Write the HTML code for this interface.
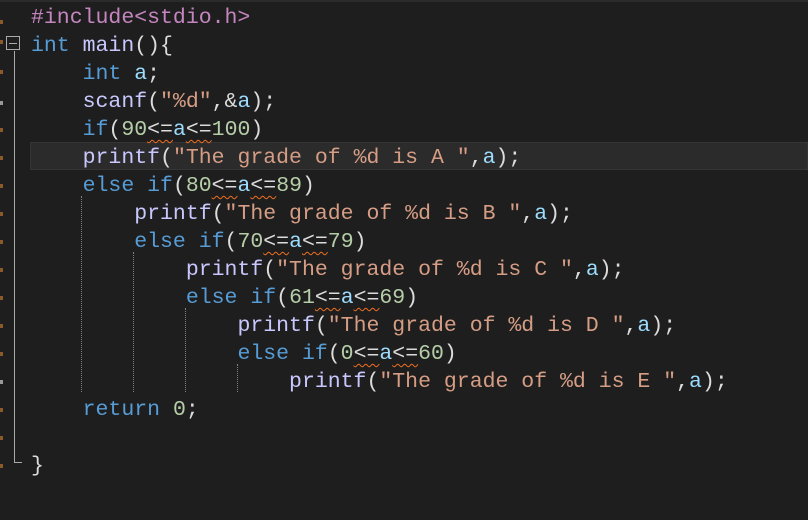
<!DOCTYPE html>
<html><head><meta charset="utf-8"><style>
html,body{margin:0;padding:0;}
body{width:808px;height:520px;background:#1e1e1e;position:relative;overflow:hidden;font-family:"Liberation Mono",monospace;font-size:21.5px;}
.l{position:absolute;left:31px;height:28px;line-height:28px;white-space:pre;color:#dcdcdc;margin-top:2px;}
.k{color:#569cd6}.f{color:#c8c8ff}.v{color:#9cdcfe}.s{color:#d69d85}.n{color:#b5cea8}.p{color:#c586c0}.o{color:#dcdcdc}
.w{text-decoration:underline wavy #f07020;text-decoration-thickness:1px;text-underline-offset:4px;}
.hl{position:absolute;left:30px;top:142px;width:778px;height:28px;background:#2b2b2b;border:1px solid #353535;box-sizing:border-box;}
.g{position:absolute;width:0;border-left:1px dotted #808080;}
.m{position:absolute;left:0;width:3px;height:4px;background:#8a5a2a;}
</style></head><body>
<div style="position:absolute;left:0;top:0;width:808px;height:2px;background:#2a2a2a"></div>
<div class="hl"></div>
<div style="position:absolute;left:6px;top:36px;width:14px;height:14px;border:1px solid #aaa;box-sizing:border-box"></div>
<div style="position:absolute;left:9px;top:43px;width:8px;height:1px;background:#aaa"></div>
<div style="position:absolute;left:14px;top:51px;width:1px;height:411px;background:#aaa"></div>
<div style="position:absolute;left:14px;top:462px;width:8px;height:1px;background:#aaa"></div>
<div class="g" style="left:81px;top:196px;height:196px"></div>
<div class="g" style="left:133px;top:252px;height:140px"></div>
<div class="g" style="left:185px;top:308px;height:84px"></div>
<div class="g" style="left:237px;top:364px;height:28px"></div>
<div class="m" style="top:20px"></div><div class="m" style="top:40px"></div><div class="m" style="top:70px"></div>
<div class="m" style="top:101px;background:#999"></div><div class="m" style="top:128px"></div><div class="m" style="top:156px"></div>
<div class="m" style="top:184px"></div><div class="m" style="top:212px"></div><div class="m" style="top:240px"></div>
<div class="m" style="top:268px"></div><div class="m" style="top:296px"></div><div class="m" style="top:324px"></div>
<div class="m" style="top:352px"></div><div class="m" style="top:380px;background:#999"></div><div class="m" style="top:408px"></div>
<div class="m" style="top:436px"></div><div class="m" style="top:464px"></div>

<div class="l" style="top:2px"><span class="p">#include&lt;stdio.h&gt;</span></div>
<div class="l" style="top:30px"><span class="k">int</span> <span class="f">main</span>(){</div>
<div class="l" style="top:58px">    <span class="k">int</span> <span class="v">a</span>;</div>
<div class="l" style="top:86px">    <span class="f">scanf</span>(<span class="s">"%d"</span>,&amp;<span class="v">a</span>);</div>
<div class="l" style="top:114px">    <span class="k">if</span>(<span class="n">90</span><span class="w">&lt;=</span><span class="v">a</span><span class="w">&lt;=</span><span class="n">100</span>)</div>
<div class="l" style="top:142px">    <span class="f">printf</span>(<span class="s">"The grade of %d is A "</span>,<span class="v">a</span>);</div>
<div class="l" style="top:170px">    <span class="k">else</span> <span class="k">if</span>(<span class="n">80</span><span class="w">&lt;=</span><span class="v">a</span><span class="w">&lt;=</span><span class="n">89</span>)</div>
<div class="l" style="top:198px">        <span class="f">printf</span>(<span class="s">"The grade of %d is B "</span>,<span class="v">a</span>);</div>
<div class="l" style="top:226px">        <span class="k">else</span> <span class="k">if</span>(<span class="n">70</span><span class="w">&lt;=</span><span class="v">a</span><span class="w">&lt;=</span><span class="n">79</span>)</div>
<div class="l" style="top:254px">            <span class="f">printf</span>(<span class="s">"The grade of %d is C "</span>,<span class="v">a</span>);</div>
<div class="l" style="top:282px">            <span class="k">else</span> <span class="k">if</span>(<span class="n">61</span><span class="w">&lt;=</span><span class="v">a</span><span class="w">&lt;=</span><span class="n">69</span>)</div>
<div class="l" style="top:310px">                <span class="f">printf</span>(<span class="s">"The grade of %d is D "</span>,<span class="v">a</span>);</div>
<div class="l" style="top:338px">                <span class="k">else</span> <span class="k">if</span>(<span class="n">0</span><span class="w">&lt;=</span><span class="v">a</span><span class="w">&lt;=</span><span class="n">60</span>)</div>
<div class="l" style="top:366px">                    <span class="f">printf</span>(<span class="s">"The grade of %d is E "</span>,<span class="v">a</span>);</div>
<div class="l" style="top:394px">    <span class="k">return</span> <span class="n">0</span>;</div>
<div class="l" style="top:450px">}</div>
</body></html>
